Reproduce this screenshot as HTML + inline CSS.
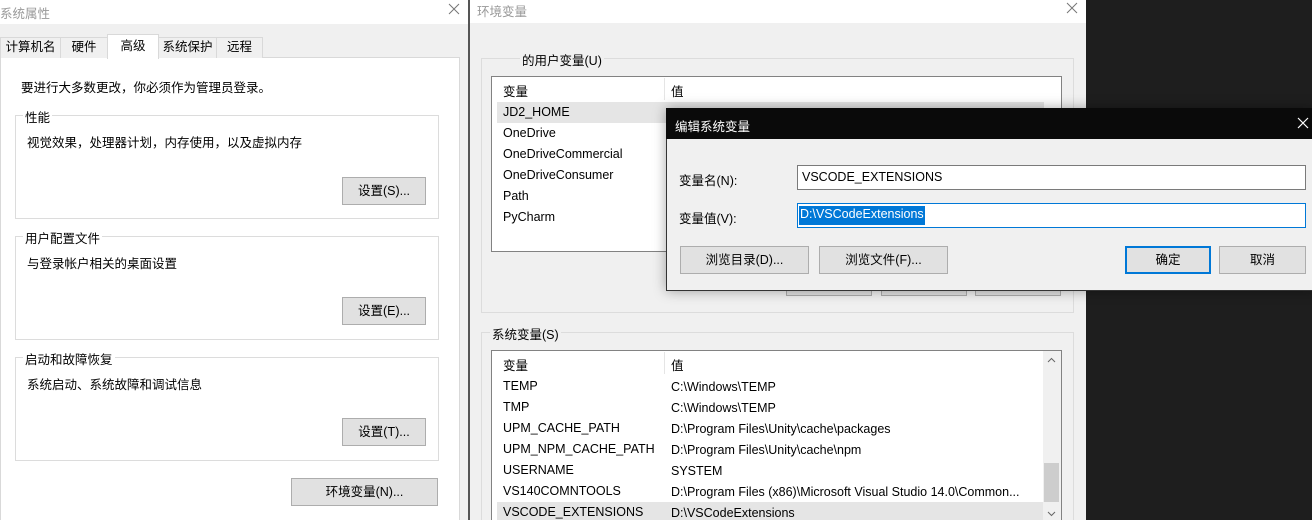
<!DOCTYPE html>
<html><head><meta charset="utf-8"><style>
*{box-sizing:border-box;margin:0;padding:0}
html,body{width:1312px;height:520px;overflow:hidden}
body{position:relative;background:#1e1e1e;font-family:"Liberation Sans","Noto Sans CJK SC",sans-serif;font-size:12.5px;color:#000}
.a{position:absolute}
.btn{position:absolute;background:#e1e1e1;border:1px solid #adadad;text-align:center;font-size:12.5px}
.grp{position:absolute;border:1px solid #dcdcdc}
.gt{position:absolute;top:-9px;left:7px;padding:0 2px;background:#fff}
.tab{position:absolute;top:37px;height:21px;border:1px solid #d9d9d9;border-bottom:none;background:#f0f0f0;text-align:center;line-height:19px;font-size:12.5px}
.row{position:absolute;left:503px;height:21px;line-height:21px;white-space:nowrap}
.v{position:absolute;left:671px;white-space:nowrap}
</style></head><body>
<div class="a" style="left:0;top:0;width:468px;height:520px;background:#f0f0f0"></div>
<div class="a" style="left:0;top:0;width:468px;height:24px;background:#fff"></div>
<div class="a" style="left:0;top:3px;color:#999;font-size:12.5px">系统属性</div>
<svg class="a" style="left:448px;top:3px" width="12" height="12"><path d="M1 1L11 11M11 1L1 11" stroke="#777" stroke-width="1"/></svg>
<div class="a" style="left:0;top:57px;width:460px;height:463px;background:#fff;border:1px solid #d9d9d9;border-bottom:none"></div>
<div class="tab" style="left:0;width:61px">计算机名</div>
<div class="tab" style="left:60px;width:48px">硬件</div>
<div class="tab" style="left:107px;top:34px;height:25px;width:52px;background:#fff;line-height:22px">高级</div>
<div class="tab" style="left:158px;width:59px">系统保护</div>
<div class="tab" style="left:216px;width:47px">远程</div>
<div class="a" style="left:21px;top:77px">要进行大多数更改，你必须作为管理员登录。</div>
<div class="grp" style="left:15px;top:115px;width:424px;height:104px"><span class="gt">性能</span></div>
<div class="a" style="left:27px;top:132px">视觉效果，处理器计划，内存使用，以及虚拟内存</div>
<div class="btn" style="left:342px;top:177px;width:84px;height:28px;line-height:26px">设置(S)...</div>
<div class="grp" style="left:15px;top:236px;width:424px;height:104px"><span class="gt">用户配置文件</span></div>
<div class="a" style="left:27px;top:253px">与登录帐户相关的桌面设置</div>
<div class="btn" style="left:342px;top:297px;width:84px;height:28px;line-height:26px">设置(E)...</div>
<div class="grp" style="left:15px;top:357px;width:424px;height:104px"><span class="gt">启动和故障恢复</span></div>
<div class="a" style="left:27px;top:374px">系统启动、系统故障和调试信息</div>
<div class="btn" style="left:342px;top:418px;width:84px;height:28px;line-height:26px">设置(T)...</div>
<div class="btn" style="left:291px;top:478px;width:147px;height:28px;line-height:26px">环境变量(N)...</div>
<div class="a" style="left:468px;top:0;width:2px;height:520px;background:#555"></div>
<div class="a" style="left:470px;top:0;width:616px;height:520px;background:#f0f0f0"></div>
<div class="a" style="left:470px;top:0;width:616px;height:23px;background:#fff"></div>
<div class="a" style="left:477px;top:1px;color:#999">环境变量</div>
<svg class="a" style="left:1066px;top:2px" width="12" height="12"><path d="M1 1L11 11M11 1L1 11" stroke="#777" stroke-width="1"/></svg>
<div class="grp" style="left:481px;top:58px;width:593px;height:255px"><span class="gt" style="left:38px;background:#f0f0f0">的用户变量(U)</span></div>
<div class="a" style="left:491px;top:76px;width:571px;height:176px;background:#fff;border:1px solid #828282"></div>
<div class="a" style="left:664px;top:78px;width:1px;height:22px;background:#e5e5e5"></div>
<div class="a" style="left:503px;top:81px">变量</div><div class="a" style="left:671px;top:81px">值</div>
<div class="a" style="left:497px;top:102px;width:547px;height:21px;background:#e5e5e5"></div>
<div class="row" style="top:102px">JD2_HOME</div>
<div class="row" style="top:123px">OneDrive</div>
<div class="row" style="top:144px">OneDriveCommercial</div>
<div class="row" style="top:165px">OneDriveConsumer</div>
<div class="row" style="top:186px">Path</div>
<div class="row" style="top:207px">PyCharm</div>
<div class="btn" style="left:786px;top:270px;width:86px;height:26px"></div>
<div class="btn" style="left:881px;top:270px;width:86px;height:26px"></div>
<div class="btn" style="left:975px;top:270px;width:86px;height:26px"></div>
<div class="grp" style="left:481px;top:332px;width:593px;height:188px;border-bottom:none"><span class="gt" style="left:8px;background:#f0f0f0">系统变量(S)</span></div>
<div class="a" style="left:491px;top:350px;width:571px;height:170px;background:#fff;border:1px solid #828282;border-bottom:none"></div>
<div class="a" style="left:664px;top:352px;width:1px;height:22px;background:#e5e5e5"></div>
<div class="a" style="left:503px;top:355px">变量</div><div class="a" style="left:671px;top:355px">值</div>
<div class="a" style="left:1043px;top:351px;width:18px;height:169px;background:#f0f0f0"></div>
<div class="a" style="left:1044px;top:463px;width:15px;height:39px;background:#cdcdcd"></div>
<svg class="a" style="left:1047px;top:357px" width="9" height="6"><path d="M1 5L4.5 1.5L8 5" stroke="#666" fill="none"/></svg>
<svg class="a" style="left:1047px;top:511px" width="9" height="6"><path d="M1 1L4.5 4.5L8 1" stroke="#666" fill="none"/></svg>
<div class="a" style="left:497px;top:502px;width:546px;height:21px;background:#e5e5e5"></div>
<div class="row" style="top:376px">TEMP</div><div class="v" style="top:380px">C:\Windows\TEMP</div>
<div class="row" style="top:397px">TMP</div><div class="v" style="top:401px">C:\Windows\TEMP</div>
<div class="row" style="top:418px">UPM_CACHE_PATH</div><div class="v" style="top:422px">D:\Program Files\Unity\cache\packages</div>
<div class="row" style="top:439px">UPM_NPM_CACHE_PATH</div><div class="v" style="top:443px">D:\Program Files\Unity\cache\npm</div>
<div class="row" style="top:460px">USERNAME</div><div class="v" style="top:464px">SYSTEM</div>
<div class="row" style="top:481px">VS140COMNTOOLS</div><div class="v" style="top:485px">D:\Program Files (x86)\Microsoft Visual Studio 14.0\Common...</div>
<div class="row" style="top:502px">VSCODE_EXTENSIONS</div><div class="v" style="top:506px">D:\VSCodeExtensions</div>
<div class="a" style="left:666px;top:108px;width:650px;height:183px;background:#f0f0f0;border:1px solid #333;box-shadow:0 0 12px rgba(0,0,0,.35)"></div>
<div class="a" style="left:666px;top:108px;width:650px;height:31px;background:#0a0a0a"></div>
<div class="a" style="left:675px;top:116px;color:#fff">编辑系统变量</div>
<svg class="a" style="left:1297px;top:117px" width="12" height="12"><path d="M1 1L11 11M11 1L1 11" stroke="#fff" stroke-width="1.2"/></svg>
<div class="a" style="left:679px;top:170px">变量名(N):</div>
<div class="a" style="left:797px;top:165px;width:509px;height:25px;background:#fff;border:1px solid #7a7a7a;padding:4px 4px">VSCODE_EXTENSIONS</div>
<div class="a" style="left:679px;top:208px">变量值(V):</div>
<div class="a" style="left:797px;top:203px;width:509px;height:25px;background:#fff;border:1px solid #0078d7"></div>
<div class="a" style="left:799px;top:206px;height:19px;background:#0078d7;color:#fff;padding:1px 1px">D:\VSCodeExtensions</div>
<div class="btn" style="left:680px;top:246px;width:129px;height:28px;line-height:26px">浏览目录(D)...</div>
<div class="btn" style="left:819px;top:246px;width:129px;height:28px;line-height:26px">浏览文件(F)...</div>
<div class="btn" style="left:1125px;top:246px;width:86px;height:28px;line-height:24px;border:2px solid #0078d7">确定</div>
<div class="btn" style="left:1219px;top:246px;width:87px;height:28px;line-height:26px">取消</div>
</body></html>
